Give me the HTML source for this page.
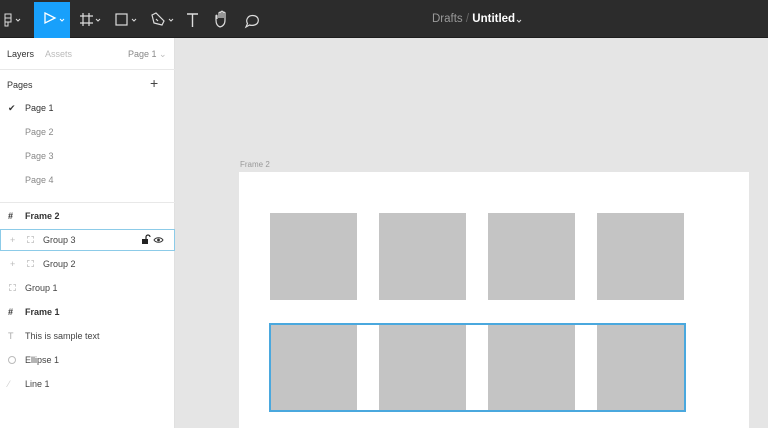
<!DOCTYPE html>
<html><head><meta charset="utf-8"><style>
*{margin:0;padding:0;box-sizing:border-box}
html,body{width:768px;height:428px;overflow:hidden}
body{position:relative;background:#e5e5e5;font-family:"Liberation Sans",sans-serif}
.top{position:absolute;left:0;top:0;width:768px;height:38px;background:#2c2c2c;border-bottom:1px solid #1e1e1e}
.sel{position:absolute;left:34px;top:2px;width:36px;height:36px;background:#18a0fb}
.side{position:absolute;left:0;top:38px;width:175px;height:400px;background:#fff;border-right:1px solid #e0e0e0}
.t{position:absolute;font-size:9px;color:#444;white-space:nowrap}
.g{color:#888}
.b{font-weight:bold;color:#333}
.hl{position:absolute;left:0;width:175px;height:1px;background:#e8e8e8}
.frame{position:absolute;left:239px;top:172px;width:510px;height:260px;background:#fff}
.r{position:absolute;width:87px;height:87px;background:#c4c4c4}
</style></head><body>
<div class="top">
 <div class="sel"></div>
 <svg width="768" height="38" style="position:absolute;left:0;top:0" fill="none" stroke="#ddd" stroke-width="1.2">
  <path d="M5 14h6v4h-6zM5 18h6v4h-6zM5 22h3v4h-3z" stroke-width="1"/>
  <path d="M16 19l2 2 2-2" stroke-width="1"/>
  <path d="M45 13l10 5-10 5z" stroke="#fff" stroke-width="1.3"/>
  <path d="M60 19l2 2 2-2" stroke="#fff" stroke-width="1"/>
  <path d="M83 13v13M89 13v13M80 16h13M80 23h13"/>
  <path d="M96 19l2 2 2-2" stroke-width="1"/>
  <rect x="116" y="14" width="11" height="11"/>
  <path d="M132 19l2 2 2-2" stroke-width="1"/>
  <path d="M152 15l4-2 8 8-2 4-8-2z M156 19l2 2"/>
  <path d="M169 19l2 2 2-2" stroke-width="1"/>
  <path d="M187 14h11M192.5 14v13" stroke-width="1.4"/>
  <path d="M220 27c-3-1-4-4-4-7v-4c0-1 1-1 1 0v3M219 18v-5c0-1 2-1 2 0v5M221 18v-6c0-1 2-1 2 0v6M223 18v-5c0-1 2-1 2 0v7c0 3-1 6-5 7"/>
  <path d="M246 27l1.5-3.5c-2-3 0-8 5-8s6.5 3.5 5.5 6.5-5.5 4-8.5 3z"/>
  <path d="M517 20l2 2 2-2" stroke-width="1"/>
 </svg>
 <div class="t" style="left:432px;top:13px;font-size:11.5px;color:#9a9a9a">Drafts <span style="color:#666">/</span> <b style="color:#fff">Untitled</b></div>
</div>
<div class="side">
 <div class="t" style="left:7px;top:11px;color:#333">Layers</div>
 <div class="t" style="left:45px;top:11px;color:#bbb">Assets</div>
 <div class="t g" style="left:128px;top:11px">Page 1 <span style="color:#bbb">⌄</span></div>
 <div class="hl" style="top:31px"></div>
 <div class="t" style="left:7px;top:42px;color:#333">Pages</div>
 <div class="t" style="left:150px;top:37px;font-size:14px;color:#444">+</div>
 <div class="t" style="left:8px;top:65px;color:#333">✔</div>
 <div class="t" style="left:25px;top:65px;color:#333">Page 1</div>
 <div class="t g" style="left:25px;top:89px">Page 2</div>
 <div class="t g" style="left:25px;top:113px">Page 3</div>
 <div class="t g" style="left:25px;top:137px">Page 4</div>
 <div class="hl" style="top:164px"></div>
 <div class="t b" style="left:8px;top:173px">#</div>
 <div class="t b" style="left:25px;top:173px">Frame 2</div>
 <div style="position:absolute;left:0;top:191px;width:175px;height:22px;border:1px solid #8ccbe8"></div>
 <div class="t" style="left:10px;top:197px;color:#bbb">+</div>
 <div style="position:absolute;left:27px;top:198px;width:7px;height:7px;border:1px dashed #ccc"></div>
 <div class="t" style="left:43px;top:197px">Group 3</div>
 <svg width="30" height="12" style="position:absolute;left:140px;top:196px">
  <rect x="2" y="5" width="6" height="5" fill="#222"/>
  <path d="M6 5v-2a2 2 0 0 1 4 0" fill="none" stroke="#222" stroke-width="1.2"/>
  <path d="M14 6c2-3 7-3 9 0c-2 3-7 3-9 0z" fill="none" stroke="#333" stroke-width="1"/>
  <circle cx="18.5" cy="6" r="1.4" fill="#333"/>
 </svg>
 <div class="t" style="left:10px;top:221px;color:#bbb">+</div>
 <div style="position:absolute;left:27px;top:222px;width:7px;height:7px;border:1px dashed #ccc"></div>
 <div class="t" style="left:43px;top:221px">Group 2</div>
 <div style="position:absolute;left:9px;top:246px;width:7px;height:7px;border:1px dashed #ccc"></div>
 <div class="t" style="left:25px;top:245px">Group 1</div>
 <div class="t b" style="left:8px;top:269px">#</div>
 <div class="t b" style="left:25px;top:269px">Frame 1</div>
 <div class="t" style="left:8px;top:293px;color:#aaa">T</div>
 <div class="t" style="left:25px;top:293px">This is sample text</div>
 <div style="position:absolute;left:8px;top:318px;width:8px;height:8px;border:1px solid #bbb;border-radius:50%"></div>
 <div class="t" style="left:25px;top:317px">Ellipse 1</div>
 <div class="t" style="left:8px;top:341px;color:#ccc">⁄</div>
 <div class="t" style="left:25px;top:341px">Line 1</div>
</div>
<div class="t" style="left:240px;top:160px;font-size:8px;color:#999">Frame 2</div>
<div class="frame"></div>
<div class="r" style="left:270px;top:213px"></div>
<div class="r" style="left:379px;top:213px"></div>
<div class="r" style="left:488px;top:213px"></div>
<div class="r" style="left:597px;top:213px"></div>
<div class="r" style="left:270px;top:324px"></div>
<div class="r" style="left:379px;top:324px"></div>
<div class="r" style="left:488px;top:324px"></div>
<div class="r" style="left:597px;top:324px"></div>
<div style="position:absolute;left:269px;top:323px;width:417px;height:89px;border:2px solid #4aa8de"></div>
</body></html>
